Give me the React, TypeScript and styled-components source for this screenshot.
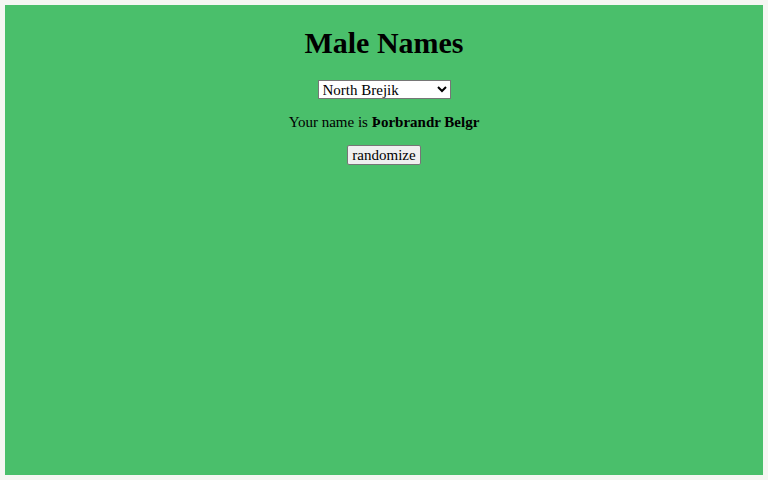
import React, { useState } from 'react';
import styled, { createGlobalStyle } from 'styled-components';

const GlobalStyle = createGlobalStyle`
  body {
    margin: 5px;
    background: #f5f6f3;
    font-family: "Liberation Serif", "Times New Roman", serif;
  }
`;

const Panel = styled.main`
  height: 470px;
  background: #4abf6b;
  display: flex;
  flex-direction: column;
  align-items: center;
  padding-top: 21px;
  box-sizing: border-box;
`;

const Title = styled.h1`
  margin: 0 0 20px;
  font-size: 30px;
  font-weight: bold;
  line-height: 34px;
`;

const RegionSelect = styled.select`
  width: 133px;
  height: 19px;
  font-family: "Liberation Serif", serif;
  font-size: 15px;
  padding: 0;
  background: #fff;
  border: 1px solid #767676;
  border-radius: 0;
`;

const Line = styled.p`
  margin: 15px 0 14px;
  font-size: 15px;
  line-height: 17px;
`;

const Button = styled.button`
  font-family: "Liberation Serif", serif;
  font-size: 15px;
  padding: 1px 4px;
  height: 20px;
  line-height: 16px;
  background: #efefef;
  border: 1px solid #767676;
  border-radius: 2px;
  color: #000;
`;

const names = ['Þorbrandr Belgr'];

export default function App() {
  const [region, setRegion] = useState('North Brejik');
  const [name, setName] = useState(names[0]);

  return (
    <>
      <GlobalStyle />
      <Panel>
        <Title>Male Names</Title>
        <RegionSelect value={region} onChange={(e) => setRegion(e.target.value)}>
          <option>North Brejik</option>
          <option>South Brejik</option>
        </RegionSelect>
        <Line>
          Your name is <b>{name}</b>
        </Line>
        <Button onClick={() => setName(names[Math.floor(Math.random() * names.length)])}>
          randomize
        </Button>
      </Panel>
    </>
  );
}
